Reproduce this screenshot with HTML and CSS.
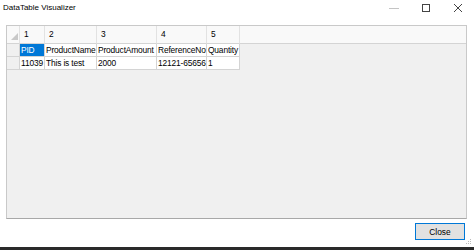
FILE: index.html
```html
<!DOCTYPE html>
<html>
<head>
<meta charset="utf-8">
<link rel="stylesheet" href="styles.css">
</head>
<body>
<div class="window">
  <div class="titlebar">
    <span class="title">DataTable Visualizer</span>
    <div class="controls">
      <span class="ctl min"><svg width="10" height="10" viewBox="0 0 10 10"><line x1="0" y1="5.5" x2="10" y2="5.5" stroke="#c4c4c4" stroke-width="1"/></svg></span>
      <span class="ctl max"><svg width="10" height="10" viewBox="0 0 10 10"><rect x="1.5" y="1.5" width="7" height="7" fill="none" stroke="#444" stroke-width="1"/></svg></span>
      <span class="ctl close"><svg width="10" height="10" viewBox="0 0 10 10"><path d="M1 1L9 9M9 1L1 9" stroke="#444" stroke-width="1"/></svg></span>
    </div>
  </div>
  <div class="body">
    <div class="panel">
      <div class="grid">
        <div class="row head">
          <div class="cell rh corner"><svg width="7" height="7" viewBox="0 0 7 7"><polygon points="7,0 7,7 0,7" fill="#c8c8c8"/></svg></div>
          <div class="cell c1">1</div>
          <div class="cell c2">2</div>
          <div class="cell c3">3</div>
          <div class="cell c4">4</div>
          <div class="cell c5">5</div>
          <div class="cell fill"></div>
        </div>
        <div class="row">
          <div class="cell rh"></div>
          <div class="cell c1 sel">PID</div>
          <div class="cell c2">ProductName</div>
          <div class="cell c3">ProductAmount</div>
          <div class="cell c4">ReferenceNo</div>
          <div class="cell c5">Quantity</div>
        </div>
        <div class="row">
          <div class="cell rh"></div>
          <div class="cell c1">11039</div>
          <div class="cell c2">This is test</div>
          <div class="cell c3">2000</div>
          <div class="cell c4">12121-65656</div>
          <div class="cell c5">1</div>
        </div>
      </div>
    </div>
    <div class="footer">
      <button class="btn">Close</button>
    </div>
  </div>
  <div class="grip"><svg width="6" height="6" viewBox="0 0 6 6"><rect x="4" y="0" width="1" height="1" fill="#bbb"/><rect x="2" y="2" width="1" height="1" fill="#bbb"/><rect x="4" y="2" width="1" height="1" fill="#bbb"/><rect x="0" y="4" width="1" height="1" fill="#bbb"/><rect x="2" y="4" width="1" height="1" fill="#bbb"/><rect x="4" y="4" width="1" height="1" fill="#bbb"/></svg></div>
  <div class="taskbar"></div>
</div>
</body>
</html>
```
FILE: styles.css
```css
html, body {
  margin: 0;
  padding: 0;
  background: #ffffff;
}
.window {
  position: relative;
  width: 474px;
  height: 250px;
  display: flex;
  flex-direction: column;
  font-family: "Liberation Sans", Arial, sans-serif;
  font-size: 8.4px;
  color: #000;
  background: #fff;
}
.titlebar {
  height: 25px;
  display: flex;
  align-items: flex-start;
  justify-content: space-between;
  flex: none;
}
.title {
  padding: 2px 0 0 3px;
  font-size: 8px;
  line-height: 12px;
  color: #000;
}
.controls {
  display: flex;
  padding-top: 2px;
}
.ctl {
  width: 32px;
  height: 12px;
  display: flex;
  align-items: center;
  justify-content: center;
}
.body {
  flex: 1;
  display: flex;
  flex-direction: column;
  padding: 0 7px 0 6px;
}
.panel {
  height: 194px;
  box-sizing: border-box;
  border: 1px solid #c9c9c9;
  border-bottom-color: #a8a8a8;
  background: #f0f0f0;
  flex: none;
}
.grid {
  display: flex;
  flex-direction: column;
}
.row {
  display: flex;
  height: 13px;
}
.row.head {
  height: 18px;
}
.cell {
  box-sizing: border-box;
  border-right: 1px solid #d4d4d4;
  border-bottom: 1px solid #d4d4d4;
  background: #fff;
  padding-left: 1px;
  line-height: 12px;
  letter-spacing: -0.15px;
  white-space: nowrap;
  overflow: hidden;
}
.head .cell {
  background: #f9f9f9;
  line-height: 17px;
  padding-left: 4px;
  border-right-color: #e2e2e2;
  border-bottom-color: #d4d4d4;
}
.cell.rh {
  width: 13px;
  background: #f0f0f0;
  padding: 0;
}
.head .cell.corner {
  background: #f9f9f9;
  display: flex;
  align-items: flex-end;
  justify-content: flex-end;
  padding: 0 1px 3px 0;
}
.c1 { width: 25px; }
.c2 { width: 52px; }
.c3 { width: 60px; }
.c4 { width: 50px; }
.c5 { width: 33px; }
.cell.fill {
  flex: 1;
  border-right: none;
}
.cell.sel {
  background: #0078d7;
  color: #fff;
}
.footer {
  flex: none;
  display: flex;
  justify-content: flex-end;
  padding: 4px 2px 0 0;
}
.btn {
  width: 50px;
  height: 17px;
  box-sizing: border-box;
  border: 1px solid #0078d7;
  background: #e1e1e1;
  font-family: "Liberation Sans", Arial, sans-serif;
  font-size: 8.4px;
  color: #000;
  padding: 0;
  line-height: 14px;
}
.grip {
  position: absolute;
  right: 2px;
  bottom: 5px;
  line-height: 0;
}
.taskbar {
  position: absolute;
  left: 0;
  right: 0;
  bottom: 0;
  height: 3px;
  background: #2a2a2a;
}
```
